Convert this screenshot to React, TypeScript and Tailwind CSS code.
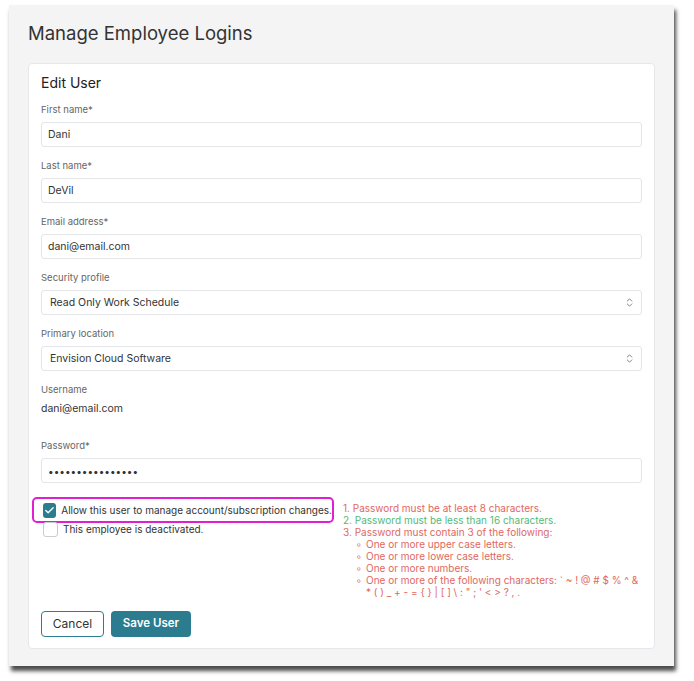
import { ChevronsUpDown, Check } from 'lucide-react';

const teal = 'bg-[#2b7c8f]';

const Field = ({ label, children, first }: { label: string; children: React.ReactNode; first?: boolean }) => (
  <div className={first ? 'mt-[10px]' : 'mt-[12px]'}>
    <div className="h-[14px] text-[9.5px] leading-[14px] text-[#666]">{label}</div>
    <div className="mt-[5px]">{children}</div>
  </div>
);

const TextInput = ({ value, dots }: { value: string; dots?: boolean }) => (
  <div className={`flex h-[25px] items-center rounded-[3px] border border-[#e3e5e8] bg-white px-[6px] pt-[1px] text-[#333] ${dots ? 'text-[10px]' : 'text-[10.5px]'}`}>
    <span>{value}</span>
  </div>
);

const SelectInput = ({ value }: { value: string }) => (
  <div className="flex h-[25px] items-center justify-between rounded-[3px] border border-[#e3e5e8] bg-white pl-[8px] pr-[6px] text-[10.5px] text-[#333]">
    <span>{value}</span>
    <ChevronsUpDown size={11} className="text-[#777]" strokeWidth={2} />
  </div>
);

const rules = [
  'One or more upper case letters.',
  'One or more lower case letters.',
  'One or more numbers.',
];

export default function App() {
  return (
    <div className="min-h-screen bg-white pl-[9px] pt-[5px]" style={{ fontFamily: 'Inter, "Noto Sans", sans-serif' }}>
      <div className="w-[665px] bg-[#f4f4f5] px-[19px] pb-[17px] pt-[15px] shadow-[2px_5px_4px_rgba(0,0,0,0.7)]">
        <h1 className="h-[27px] text-[18.5px] leading-[27px] text-[#333]">Manage Employee Logins</h1>
        <div className="mt-[16px] rounded-[4px] border border-[#e6e7ea] bg-white px-[12px] pb-[11px] pt-[9px]">
          <h2 className="h-[20px] text-[14px] leading-[20px] text-[#222]">Edit User</h2>

          <Field label="First name*" first>
            <TextInput value="Dani" />
          </Field>
          <Field label="Last name*">
            <TextInput value="DeVil" />
          </Field>
          <Field label="Email address*">
            <TextInput value="dani@email.com" />
          </Field>
          <Field label="Security profile">
            <SelectInput value="Read Only Work Schedule" />
          </Field>
          <Field label="Primary location">
            <SelectInput value="Envision Cloud Software" />
          </Field>
          <div className="mt-[12px]">
            <div className="h-[14px] text-[9.5px] leading-[14px] text-[#666]">Username</div>
            <div className="mt-[5px] h-[14px] text-[10.5px] leading-[14px] text-[#333]">dani@email.com</div>
          </div>
          <div className="mt-[23px]">
            <div className="h-[14px] text-[9.5px] leading-[14px] text-[#666]">Password*</div>
            <div className="mt-[5px]">
              <TextInput value="••••••••••••••••" dots />
            </div>
          </div>

          <div className="mt-[14px] flex">
            <div className="ml-[-9px] w-[311px] shrink-0">
              <div className="flex h-[26px] w-[302px] items-center rounded-[5px] border-2 border-[#e01ed2] pl-[9px]">
                <span className={`flex h-[15px] w-[15px] items-center justify-center rounded-[3px] ${teal}`}>
                  <Check size={11} strokeWidth={3} className="text-white" />
                </span>
                <span className="ml-[5px] whitespace-nowrap text-[10px] text-[#333]">Allow this user to manage account/subscription changes.</span>
              </div>
              <div className="mt-[-1px] flex items-center pl-[11px]">
                <span className="h-[15px] w-[15px] rounded-[3px] border border-[#c9ccd1] bg-white" />
                <span className="ml-[5px] text-[10px] text-[#333]">This employee is deactivated.</span>
              </div>
            </div>
            <div className="pt-[5px] text-[10px] leading-[12px] text-[#e0685f]">
              <div>1. Password must be at least 8 characters.</div>
              <div className="text-[#55b978]">2. Password must be less than 16 characters.</div>
              <div>3. Password must contain 3 of the following:</div>
              {rules.map((r) => (
                <div key={r} className="flex pl-[13px]">
                  <span className="w-[10px]">◦</span>
                  <span>{r}</span>
                </div>
              ))}
              <div className="flex pl-[13px]">
                <span className="w-[10px] shrink-0">◦</span>
                <span className="whitespace-nowrap">
                  One or more of the following characters: ` ~ ! @ # $ % ^ &amp;
                  <br />* ( ) _ + - = {'{ }'} | [ ] \ : " ; ' &lt; &gt; ? , .
                </span>
              </div>
            </div>
          </div>

          <div className="mt-[13px] flex gap-[7px]">
            <button className="h-[26px] w-[63px] rounded-[4px] border border-[#2b7c8f] bg-white text-[12px] text-[#333]">Cancel</button>
            <button className={`h-[26px] w-[80px] rounded-[4px] ${teal} text-[11.5px] font-semibold text-white`}>Save User</button>
          </div>
        </div>
      </div>
    </div>
  );
}
